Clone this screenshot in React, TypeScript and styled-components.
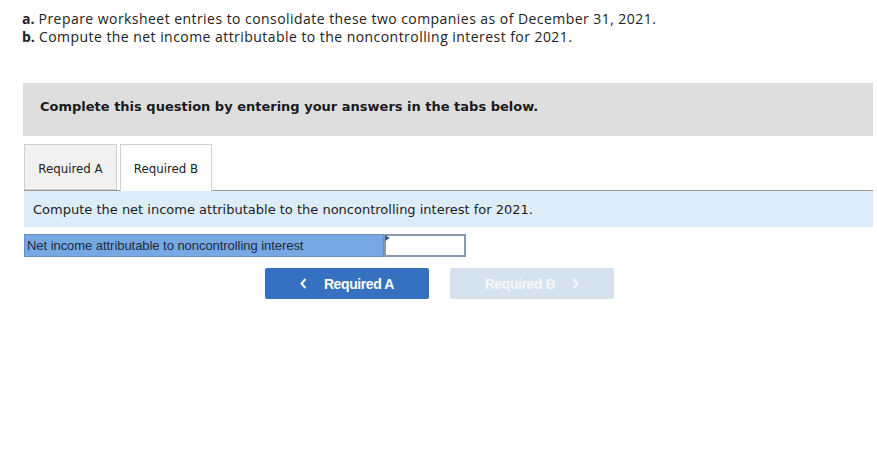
import React from "react";
import styled, { createGlobalStyle } from "styled-components";

const Global = createGlobalStyle`
  html, body { margin: 0; padding: 0; background: #ffffff; }
  body { width: 877px; height: 458px; overflow: hidden; }
`;

const Page = styled.div`
  padding: 10px 4px 0 22px;
  width: 851px;
`;

const Prompt = styled.div`
  font-family: "Open Sans", "Liberation Sans", sans-serif;
  font-size: 14px;
  line-height: 18px;
  color: #222;
  letter-spacing: 0.45px;
  white-space: nowrap;
  b { font-weight: 700; letter-spacing: 0; }
`;

const Banner = styled.div`
  margin-top: 37px;
  margin-left: 1px;
  height: 53px;
  background: #dedede;
  display: flex;
  align-items: center;
  padding-left: 17px;
  padding-bottom: 7px;
  box-sizing: border-box;
  font-family: "DejaVu Sans", Verdana, sans-serif;
  font-weight: 700;
  font-size: 13px;
  color: #1a1a1a;
`;

const TabBar = styled.div`
  margin-top: 8px;
  margin-left: 2px;
  display: flex;
  gap: 3px;
  border-bottom: 1px solid #9a9a9a;
  height: 47px;
  box-sizing: border-box;
  align-items: flex-end;
`;

const Tab = styled.div<{ $active?: boolean }>`
  height: ${(p) => (p.$active ? "47px" : "46px")};
  margin-bottom: ${(p) => (p.$active ? "-1px" : "0")};
  width: ${(p) => (p.$active ? "92px" : "93px")};
  box-sizing: border-box;
  border: 1px solid #cfcfcf;
  border-bottom: ${(p) => (p.$active ? "none" : "1px solid #cfcfcf")};
  background: ${(p) => (p.$active ? "#ffffff" : "#f1f1f1")};
  display: flex;
  align-items: center;
  justify-content: center;
  padding-top: ${(p) => (p.$active ? "2px" : "3px")};
  font-family: "DejaVu Sans", Verdana, sans-serif;
  font-size: 11.8px;
  color: #222;
`;

const Instruction = styled.div`
  margin-left: 2px;
  height: 36px;
  background: #dcecf8;
  display: flex;
  align-items: center;
  padding-left: 9px;
  padding-top: 1px;
  box-sizing: border-box;
  font-family: "DejaVu Sans", Verdana, sans-serif;
  font-size: 13px;
  color: #1e1e1e;
`;

const Row = styled.div`
  margin-top: 7px;
  margin-left: 2px;
  display: flex;
  height: 23px;
`;

const Label = styled.div`
  width: 360px;
  box-sizing: border-box;
  background: #78a8e3;
  border: 1px solid #6a8fbf;
  display: flex;
  align-items: center;
  padding-left: 2px;
  font-family: "Liberation Sans", Arial, sans-serif;
  font-size: 13px;
  color: #1c2a3c;
  letter-spacing: -0.05px;
`;

const InputCell = styled.div`
  position: relative;
  width: 82px;
  box-sizing: border-box;
  border: 2px solid #8a9aad;
  background: #fff;
`;

const Marker = styled.span`
  position: absolute;
  left: -1px;
  top: -1px;
  width: 0;
  height: 0;
  border-top: 3px solid transparent;
  border-bottom: 3px solid transparent;
  border-left: 5px solid #2d5f9e;
`;

const Nav = styled.div`
  margin-top: 11px;
  margin-left: 243px;
  display: flex;
  gap: 21px;
`;

const NavButton = styled.div<{ $disabled?: boolean }>`
  width: 164px;
  height: 31px;
  border-radius: 2px;
  background: ${(p) => (p.$disabled ? "#d6e2ee" : "#3571c0")};
  color: ${(p) => (p.$disabled ? "#f4f8fc" : "#ffffff")};
  display: flex;
  align-items: center;
  justify-content: center;
  gap: 17px;
  font-family: "Liberation Sans", Arial, sans-serif;
  font-weight: 700;
  font-size: 14px;
  letter-spacing: -0.4px;
  svg { display: block; }
`;

const Chevron = ({ dir }: { dir: "left" | "right" }) => (
  <svg width="7" height="11" viewBox="0 0 7 11">
    <path
      d={dir === "left" ? "M5.5 1 L1.5 5.5 L5.5 10" : "M1.5 1 L5.5 5.5 L1.5 10"}
      fill="none"
      stroke="currentColor"
      strokeWidth="2"
    />
  </svg>
);

export default function App() {
  return (
    <>
      <Global />
      <Page>
        <Prompt>
          <b>a.</b> Prepare worksheet entries to consolidate these two companies as of December 31, 2021.
        </Prompt>
        <Prompt>
          <b>b.</b> Compute the net income attributable to the noncontrolling interest for 2021.
        </Prompt>
        <Banner>Complete this question by entering your answers in the tabs below.</Banner>
        <TabBar>
          <Tab>Required A</Tab>
          <Tab $active>Required B</Tab>
        </TabBar>
        <Instruction>Compute the net income attributable to the noncontrolling interest for 2021.</Instruction>
        <Row>
          <Label>Net income attributable to noncontrolling interest</Label>
          <InputCell>
            <Marker />
          </InputCell>
        </Row>
        <Nav>
          <NavButton>
            <Chevron dir="left" />
            <span>Required A</span>
          </NavButton>
          <NavButton $disabled>
            <span>Required B</span>
            <Chevron dir="right" />
          </NavButton>
        </Nav>
      </Page>
    </>
  );
}
